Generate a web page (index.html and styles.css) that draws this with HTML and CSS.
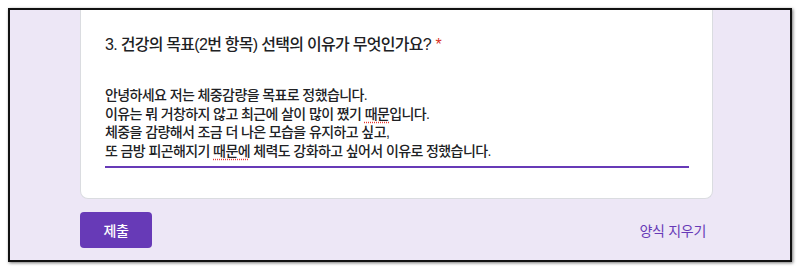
FILE: index.html
```html
<!DOCTYPE html>
<html lang="ko">
<head>
<meta charset="utf-8">
<link rel="stylesheet" href="styles.css">
</head>
<body>
<div class="frame">
  <div class="page">
    <div class="card">
      <div class="title">3. 건강의 목표(2번 항목) 선택의 이유가 무엇인가요? <span class="req">*</span></div>
      <div class="answer">
        <div>안녕하세요 저는 체중감량을 목표로 정했습니다.</div>
        <div>이유는 뭐 거창하지 않고 최근에 살이 많이 쪘기 <span class="sp">때문</span>입니다.</div>
        <div>체중을 감량해서 조금 더 나은 모습을 유지하고 싶고,</div>
        <div>또 금방 피곤해지기 <span class="sp">때문에</span> 체력도 강화하고 싶어서 이유로 정했습니다.</div>
      </div>
    </div>
    <div class="actions">
      <button class="submit">제출</button>
      <span class="clear">양식 지우기</span>
    </div>
  </div>
</div>
</body>
</html>
```

FILE: styles.css
```css
html, body {
  margin: 0;
  padding: 0;
  background: #ffffff;
}
body {
  width: 800px;
  height: 269px;
  overflow: hidden;
  font-family: "Liberation Sans", "Noto Sans CJK KR", sans-serif;
}
.frame {
  margin: 8px;
  width: 784px;
  height: 254px;
  box-sizing: border-box;
  border: 2px solid #111111;
  background: #ede7f6;
  overflow: hidden;
  box-shadow: 1px 1px 3px rgba(0, 0, 0, 0.55);
}
.page {
  padding-left: 70px;
  width: 633px;
}
.card {
  background: #ffffff;
  border: 1px solid #dadce0;
  border-top: none;
  border-radius: 0 0 8px 8px;
  padding: 23px 23px 30px 24px;
}
.title {
  font-size: 16px;
  line-height: 24px;
  letter-spacing: -0.72px;
  color: #202124;
  font-weight: 500;
}
.req {
  color: #d93025;
  margin-left: 1px;
}
.answer {
  margin-top: 29px;
  font-size: 14px;
  line-height: 18.5px;
  letter-spacing: -0.6px;
  color: #202124;
  font-weight: 500;
  padding-bottom: 6px;
  border-bottom: 2px solid #673ab7;
}
.sp {
  text-decoration: underline dotted #e53935;
  text-underline-offset: 3px;
}
.actions {
  margin-top: 13px;
  display: flex;
  justify-content: space-between;
  align-items: center;
}
.submit {
  width: 72px;
  height: 36px;
  border: none;
  border-radius: 4px;
  background: #673ab7;
  color: #ffffff;
  font-family: inherit;
  font-size: 14px;
  font-weight: 500;
  letter-spacing: -0.3px;
}
.clear {
  color: #673ab7;
  font-size: 14px;
  letter-spacing: -0.3px;
  padding-right: 7px;
}
```
